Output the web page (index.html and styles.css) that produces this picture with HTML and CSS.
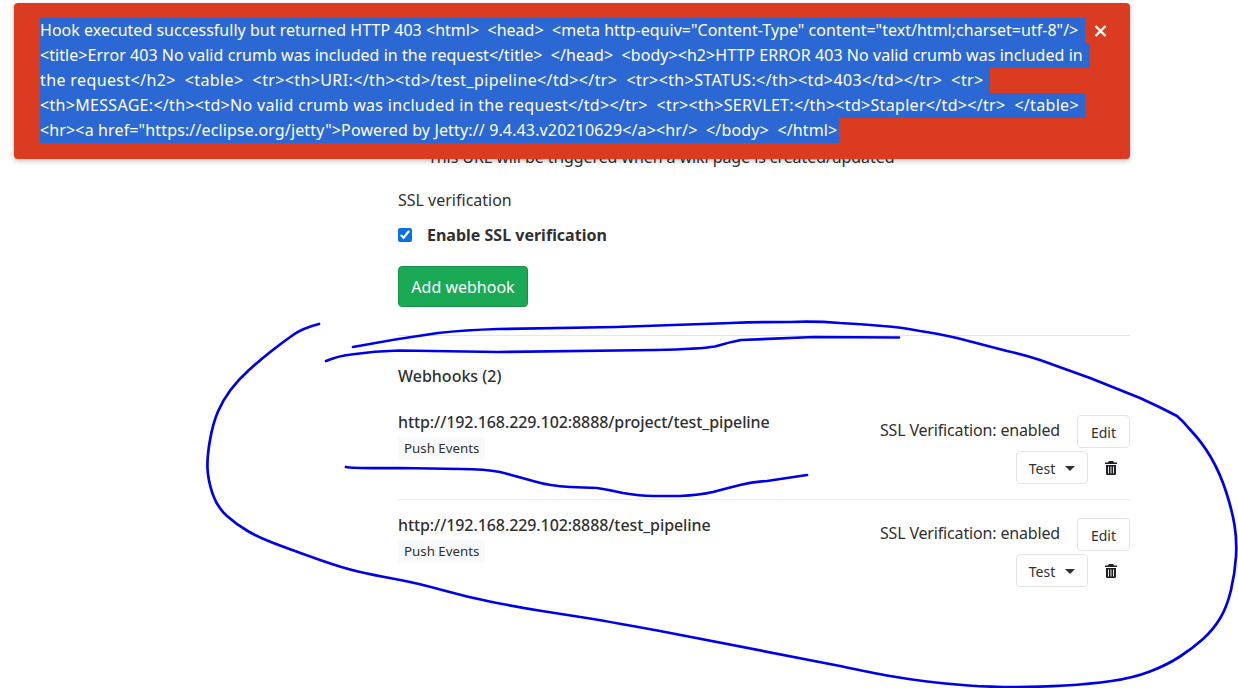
FILE: index.html
```html
<!DOCTYPE html>
<html lang="en">
<head>
<meta charset="utf-8">
<title>Webhooks</title>
<link rel="stylesheet" href="styles.css">
</head>
<body>
<main class="content">
  <p class="hint">This URL will be triggered when a wiki page is created/updated</p>
  <div class="field-title">SSL verification</div>
  <label class="check"><input type="checkbox" checked><span>Enable SSL verification</span></label>
  <button class="btn-add" type="button">Add webhook</button>
  <hr class="rule">
  <h2 class="list-title">Webhooks (2)</h2>
  <ul class="hooks">
    <li class="hook">
      <div class="hook-info">
        <div class="hook-url">http://192.168.229.102:8888/project/test_pipeline</div>
        <span class="badge">Push Events</span>
      </div>
      <div class="hook-actions">
        <div class="action-row">
          <span class="ssl">SSL Verification: enabled</span>
          <button class="btn edit" type="button">Edit</button>
        </div>
        <div class="action-row">
          <button class="btn test" type="button">Test<i class="caret"></i></button>
          <span class="trash"><svg viewBox="0 0 12 14" width="12" height="14"><path fill="#1f1f1f" d="M4 0h4l1 1.5h3V3H0V1.5h3zM1 4h10v8.5A1.5 1.5 0 0 1 9.5 14h-7A1.5 1.5 0 0 1 1 12.5z"/><path stroke="#dfe7ef" stroke-width="1" d="M3.5 5.5v7M6 5.5v7M8.5 5.5v7"/></svg></span>
        </div>
      </div>
    </li>
    <li class="hook">
      <div class="hook-info">
        <div class="hook-url">http://192.168.229.102:8888/test_pipeline</div>
        <span class="badge">Push Events</span>
      </div>
      <div class="hook-actions">
        <div class="action-row">
          <span class="ssl">SSL Verification: enabled</span>
          <button class="btn edit" type="button">Edit</button>
        </div>
        <div class="action-row">
          <button class="btn test" type="button">Test<i class="caret"></i></button>
          <span class="trash"><svg viewBox="0 0 12 14" width="12" height="14"><path fill="#1f1f1f" d="M4 0h4l1 1.5h3V3H0V1.5h3zM1 4h10v8.5A1.5 1.5 0 0 1 9.5 14h-7A1.5 1.5 0 0 1 1 12.5z"/><path stroke="#dfe7ef" stroke-width="1" d="M3.5 5.5v7M6 5.5v7M8.5 5.5v7"/></svg></span>
        </div>
      </div>
    </li>
  </ul>
</main>

<div class="flash">
  <div class="flash-text">
    <span class="sel l1">Hook executed successfully but returned HTTP 403 &lt;html&gt;  &lt;head&gt;  &lt;meta http-equiv="Content-Type" content="text/html;charset=utf-8"/&gt;</span>
    <span class="sel l2">&lt;title&gt;Error 403 No valid crumb was included in the request&lt;/title&gt;  &lt;/head&gt;  &lt;body&gt;&lt;h2&gt;HTTP ERROR 403 No valid crumb was included in</span>
    <span class="sel l3">the request&lt;/h2&gt;  &lt;table&gt;  &lt;tr&gt;&lt;th&gt;URI:&lt;/th&gt;&lt;td&gt;/test_pipeline&lt;/td&gt;&lt;/tr&gt;  &lt;tr&gt;&lt;th&gt;STATUS:&lt;/th&gt;&lt;td&gt;403&lt;/td&gt;&lt;/tr&gt;  &lt;tr&gt;</span>
    <span class="sel l4">&lt;th&gt;MESSAGE:&lt;/th&gt;&lt;td&gt;No valid crumb was included in the request&lt;/td&gt;&lt;/tr&gt;  &lt;tr&gt;&lt;th&gt;SERVLET:&lt;/th&gt;&lt;td&gt;Stapler&lt;/td&gt;&lt;/tr&gt;  &lt;/table&gt;</span>
    <span class="sel l5">&lt;hr&gt;&lt;a href="https://eclipse.org/jetty"&gt;Powered by Jetty:// 9.4.43.v20210629&lt;/a&gt;&lt;hr/&gt;  &lt;/body&gt;  &lt;/html&gt;</span>
  </div>
  <svg class="flash-close" viewBox="0 0 13 12" width="13" height="12"><path d="M1.5 1l10 10M11.5 1l-10 10" stroke="#fff" stroke-width="2.4" fill="none"/></svg>
</div>

<svg class="ink" viewBox="0 0 1238 688" width="1238" height="688">
  <path d="M319 324Q303 328 293 335Q283 342 271.5 351Q260 360 249 370Q238 380 230.5 390Q223 400 218 411.5Q213 423 210 440Q207 457 207.5 468.5Q208 480 212.5 493.5Q217 507 227 516Q237 525 248.5 531.5Q260 538 280 545.5Q300 553 321.5 560.5Q343 568 358 571.5Q373 575 395 579Q417 583 442 590Q467 597 492 602Q517 607 542 611Q567 615 583.5 617.5Q600 620 660 631L840 666Q873 673 890 676Q907 679 927 681.5Q947 684 968.5 685.5Q990 687 1015 687Q1040 687 1065 685.5Q1090 684 1111.5 681Q1133 678 1150 671.5Q1167 665 1180 656.5Q1193 648 1203 639Q1213 630 1220 618.5Q1227 607 1231 590Q1235 573 1236 556.5Q1237 540 1234.5 525Q1232 510 1226 491.5Q1220 473 1211 457.5Q1202 442 1189.5 429Q1183 421 1177 416Q1160 407 1140 398L1090 378L1040 360Q1025 355 1007 351L957 338Q935 333 920 331Q900 327 883 326Q860 324 840 323Q815 321 790 322Q760 322 731 323L616 327L498 329Q465 330 438 333Q395 339 353 347"/>
  <path d="M326 361Q338 356 351 354.5Q375 351 399 350.5L498 352L656 350Q700 349 715 346.5Q730 342 741 340L814 337L899 337.5"/>
  <path d="M346 467Q352 468.5 400 468L460 469Q485 469 500 472Q515 476 533 481Q550 486 570 487L597 488Q610 490 623 493Q640 496 653 496L680 496Q700 495 713 492Q728 488 740 485Q752 482 767 481L807 475"/>
</svg>
</body>
</html>
```
FILE: styles.css
```css
* { box-sizing: border-box; }
html, body { margin: 0; height: 688px; overflow: hidden; background: #fff; }
body {
  position: relative;
  font-family: "Noto Sans", "Liberation Sans", sans-serif;
  font-size: 16px;
  color: #303030;
}
.content { width: 732px; margin-left: 398px; padding-top: 146px; }
.hint { margin: 0 0 0 30px; line-height: 22px; white-space: nowrap; letter-spacing: -0.08px; }
.field-title { margin-top: 20px; line-height: 24px; }
.check { display: flex; align-items: center; gap: 15px; margin-top: 11px; font-weight: 700; line-height: 24px; }
.check input { margin: 0; width: 14px; height: 14px; accent-color: #0b6fe8; }
.btn-add {
  display: block; margin-top: 19px; width: 130px; height: 41px;
  background: #1aaa55; border: 1px solid #168f48; border-radius: 4px;
  color: #fff; font: inherit;
}
.rule { margin: 28px 0 0; border: 0; border-top: 1px solid #e5e5e5; }
.list-title { margin: 28px 0 0; font-size: 16px; font-weight: 500; line-height: 24px; }
.hooks { list-style: none; margin: 0; padding: 0; }
.hook { display: flex; justify-content: space-between; height: 103px; padding-top: 18px; border-bottom: 1px solid #eee; }
.hook:first-child { height: 112px; padding-top: 27px; }
.hook:last-child { border-bottom: 0; }
.hook-url { font-weight: 500; line-height: 22px; margin-top: -4px; letter-spacing: -0.09px; }
.hook-info { display: flex; flex-direction: column; align-items: flex-start; }
.badge { margin-top: 4px; padding: 0 6px; height: 23px; line-height: 23px; font-size: 13.3px; background: #f8f9fb; border-radius: 4px; }
.hook-actions { display: flex; flex-direction: column; gap: 3px; align-items: flex-end; }
.action-row { display: flex; align-items: flex-start; }
.ssl { line-height: 30px; margin-right: 17px; letter-spacing: -0.16px; }
.btn { height: 33px; background: #fff; border: 1px solid #e5e5e5; border-radius: 4px; color: #303030; font: inherit; font-size: 14px; padding: 0; }
.edit { width: 53px; padding-top: 2px; }
.test { width: 72px; display: flex; align-items: center; justify-content: center; gap: 10px; padding-top: 2px; }
.caret { width: 0; height: 0; border-left: 5px solid transparent; border-right: 5px solid transparent; border-top: 5px solid #303030; }
.trash { display: flex; align-items: center; justify-content: center; width: 38px; height: 33px; margin-left: 4px; }
.flash {
  position: absolute; left: 14px; top: 3px; width: 1116px; height: 156px;
  background: #db3b21; border-radius: 4px; box-shadow: 0 2px 5px rgba(0,0,0,.25);
  padding: 15px 0 0 26px;
}
.flash-text { display: flex; flex-direction: column; align-items: flex-start; }
.sel {
  display: block; height: 25px; line-height: 25px; background: #2b68d4; color: #fff;
  white-space: pre;
}
.l1 { width: 1045px; letter-spacing: 0.02px; }
.l2 { width: 1049px; letter-spacing: 0.05px; }
.l3 { width: 950px; letter-spacing: 0.38px; }
.l4 { width: 1045px; letter-spacing: 0.31px; }
.l5 { width: 799px; letter-spacing: 0.14px; }
.flash-close { position: absolute; left: 1080px; top: 22px; }
.ink { position: absolute; left: 0; top: 0; pointer-events: none; fill: none; stroke: #0000e6; stroke-width: 2.7; stroke-linecap: round; stroke-linejoin: round; }
```
